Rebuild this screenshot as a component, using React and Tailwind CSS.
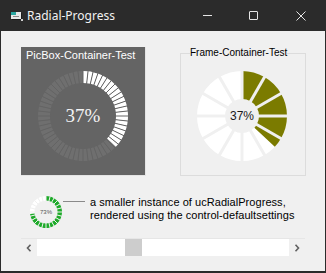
import React from "react";

function pt(c, r, a) {
  const rad = (a * Math.PI) / 180;
  return [c + r * Math.sin(rad), c - r * Math.cos(rad)];
}

function sector(c, rOut, rIn, a0, a1) {
  const large = a1 - a0 > 180 ? 1 : 0;
  const [x0, y0] = pt(c, rOut, a0);
  const [x1, y1] = pt(c, rOut, a1);
  const [x2, y2] = pt(c, rIn, a1);
  const [x3, y3] = pt(c, rIn, a0);
  return `M${x0} ${y0} A${rOut} ${rOut} 0 ${large} 1 ${x1} ${y1} L${x2} ${y2} A${rIn} ${rIn} 0 ${large} 0 ${x3} ${y3} Z`;
}

function Ring({ size, rOut, rIn, n, pct, on, off, bg, gap, className }) {
  const c = size / 2;
  const step = 360 / n;
  const fillTo = (pct / 100) * 360;
  const segs = [];
  const lines = [];
  for (let i = 0; i < n; i++) {
    const a0 = i * step;
    const a1 = a0 + step;
    segs.push(<path key={"o" + i} d={sector(c, rOut, rIn, a0, a1)} fill={off} />);
    if (fillTo > a0) {
      segs.push(
        <path key={"f" + i} d={sector(c, rOut, rIn, a0, Math.min(a1, fillTo))} fill={on} />
      );
    }
    const [lx0, ly0] = pt(c, rIn - 1, a0);
    const [lx1, ly1] = pt(c, rOut + 1, a0);
    lines.push(
      <line key={"l" + i} x1={lx0} y1={ly0} x2={lx1} y2={ly1} stroke={bg} strokeWidth={gap} />
    );
  }
  return (
    <svg width={size} height={size} className={className}>
      {segs}
      {lines}
    </svg>
  );
}

function AppIcon() {
  return (
    <svg width="12" height="9" viewBox="0 0 12 9">
      <rect x="1" y="1" width="10" height="7" fill="#1b1b1b" />
      <rect x="0" y="0" width="10" height="7" fill="#e8e8e8" />
      <rect x="0" y="0" width="5" height="3" fill="#2aa6a0" />
      <rect x="2" y="4" width="6" height="1" fill="#8a8a8a" />
      <rect x="10" y="7" width="2" height="2" fill="#cfcfcf" />
    </svg>
  );
}

export default function App() {
  return (
    <div className="w-[326px] h-[273px] bg-[#2b2b2b] flex flex-col overflow-hidden">
      {/* titlebar */}
      <div className="h-[31px] flex items-center text-white shrink-0">
        <div className="ml-[11px] mt-[1px]">
          <AppIcon />
        </div>
        <span
          className="ml-[4px] text-[12px] text-[#f2f2f2]"
          style={{ fontFamily: '"Noto Sans", sans-serif' }}
        >
          Radial-Progress
        </span>
        <div className="ml-auto flex items-center">
          <div className="w-[9px] h-[1px] bg-[#e6e6e6] mr-[37px]" />
          <div className="w-[9px] h-[9px] border border-[#e6e6e6] rounded-[1px] mr-[38px]" />
          <svg width="10" height="10" viewBox="0 0 10 10" className="mr-[20px]">
            <path d="M0.5 0.5 L9.5 9.5 M9.5 0.5 L0.5 9.5" stroke="#e6e6e6" strokeWidth="1" />
          </svg>
        </div>
      </div>

      {/* client area */}
      <div
        className="mx-[1px] mb-[2px] flex-1 bg-[#f0f0f0] pl-[20px] flex flex-col"
        style={{ fontFamily: '"Liberation Sans", Arial, sans-serif' }}
      >
        <div className="flex mt-[16px]">
          <div className="w-[125px] h-[129px] bg-[#646464] border-r border-b border-[#e4e4e4] flex flex-col items-center">
            <span className="self-start pl-[5px] pt-[2px] text-[11px] leading-[13px] text-white">
              PicBox-Container-Test
            </span>
            <div className="relative mt-[8px]">
              <Ring size={92} rOut={45} rIn={33} n={56} pct={37} on="#ffffff" off="#6f6f6f" bg="#646464" gap={1} />
              <div
                className="absolute inset-0 flex items-center justify-center text-[19px] text-[#f4f4f4]"
                style={{ fontFamily: '"Liberation Serif", "Times New Roman", serif' }}
              >
                37%
              </div>
            </div>
          </div>

          <div className="relative ml-[34px] mt-[6px] w-[126px] h-[123px] border border-[#dcdcdc]">
            <span className="absolute left-[9px] top-[-7px] bg-[#f0f0f0] text-[10px] leading-[12px] text-black">
              Frame-Container-Test
            </span>
            <div className="relative ml-[15px] mt-[16px] w-[92px] h-[92px]">
              <Ring size={92} rOut={45} rIn={17} n={12} pct={37} on="#7b7b00" off="#ffffff" bg="#f0f0f0" gap={3} />
              <div className="absolute inset-0 flex items-center justify-center text-[12px] text-[#1a1a1a]">
                37%
              </div>
            </div>
          </div>
        </div>

        <div className="flex items-start mt-[19px] ml-[8px]">
          <div className="relative w-[34px] h-[34px]">
            <Ring size={34} rOut={16} rIn={11.5} n={24} pct={73} on="#1eaa2a" off="#ffffff" bg="#f0f0f0" gap={1} />
            <div className="absolute inset-0 flex items-center justify-center text-[6px] text-[#555]">
              73%
            </div>
          </div>
          <div className="w-[22px] h-[1px] bg-[#8a8a8a] mt-[6px]" />
          <div className="ml-[5px] mt-[1px] text-[11px] leading-[13px] text-black tracking-[0.05px]">
            <div>a smaller instance of ucRadialProgress,</div>
            <div>rendered using the control-defaultsettings</div>
          </div>
        </div>

        <div className="mt-[9px] w-[284px] h-[18px] flex items-center border-t border-[#e6e6e6]">
          <div className="w-[16px] h-full flex items-center justify-center">
            <svg width="6" height="8" viewBox="0 0 6 8">
              <path d="M4.5 0.8 L1.5 4 L4.5 7.2" stroke="#606060" strokeWidth="1.6" fill="none" />
            </svg>
          </div>
          <div className="flex-1 h-full bg-white flex">
            <div className="ml-[88px] w-[17px] h-full bg-[#cdcdcd]" />
          </div>
          <div className="w-[16px] h-full flex items-center justify-center">
            <svg width="6" height="8" viewBox="0 0 6 8">
              <path d="M1.5 0.8 L4.5 4 L1.5 7.2" stroke="#606060" strokeWidth="1.6" fill="none" />
            </svg>
          </div>
        </div>
      </div>
    </div>
  );
}
